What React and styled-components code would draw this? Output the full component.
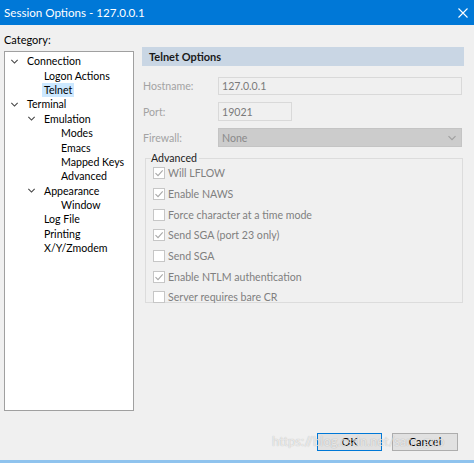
import React from "react";
import styled, { createGlobalStyle } from "styled-components";

const Global = createGlobalStyle`
  html, body { margin: 0; padding: 0; background: #f0f0f0; }
  body { font-family: Lato, "Noto Sans", sans-serif; font-size: 10.6px; }
`;

const Window = styled.div`
  position: relative;
  width: 474px;
  height: 463px;
  display: flex;
  flex-direction: column;
  background: #f0f0f0;
  box-sizing: border-box;
  border-bottom: 3px solid #8fc3ee;
  overflow: hidden;
`;

const TitleBar = styled.div`
  height: 25px;
  flex: none;
  background: #0078d7;
  color: #fff;
  display: flex;
  align-items: center;
  justify-content: space-between;
  padding: 0 6px 0 4px;
  font-size: 11.6px;
`;

const Close = styled.svg`
  width: 10px;
  height: 10px;
`;

const Body = styled.div`
  flex: 1;
  display: flex;
  flex-direction: column;
  padding: 8px 10px 0 4px;
`;

const Main = styled.div`
  display: flex;
  gap: 8px;
  height: 378px;
`;

const LeftCol = styled.div`
  width: 130px;
  display: flex;
  flex-direction: column;
  gap: 4px;
`;

const Caption = styled.div`
  height: 14px;
  line-height: 14px;
  color: #000;
  font-size: 11px;
`;

const TreeBox = styled.div`
  flex: 1;
  background: #fff;
  border: 1px solid #a0a0a0;
  padding-top: 2px;
  box-sizing: border-box;
`;

const TreeRow = styled.div`
  height: 14.4px;
  display: flex;
  align-items: center;
  padding-left: ${(p) => 5 + p.$level * 17}px;
  color: #000;
  white-space: nowrap;
`;

const Toggle = styled.span`
  width: 15px;
  display: inline-flex;
  justify-content: flex-start;
  align-items: center;
  flex: none;
`;

const TreeLabel = styled.span`
  padding: 0 2px;
  line-height: 14px;
  background: ${(p) => (p.$selected ? "#cce8ff" : "transparent")};
`;

const RightPanel = styled.div`
  flex: 1;
  display: flex;
  flex-direction: column;
  margin-top: 14px;
`;

const Header = styled.div`
  height: 19px;
  background: #c9d6e4;
  display: flex;
  align-items: center;
  padding-left: 7px;
  font-weight: 700;
  font-size: 11px;
  color: #1a1a1a;
  margin-bottom: 11px;
`;

const FormRow = styled.div`
  display: flex;
  align-items: center;
  margin-bottom: ${(p) => (p.$last ? 0 : 7)}px;
  padding-left: 1px;
`;

const FieldLabel = styled.div`
  width: 75px;
  color: #a3a3a3;
`;

const Input = styled.div`
  box-sizing: border-box;
  width: ${(p) => p.$w}px;
  height: ${(p) => p.$h || 19}px;
  border: 1px solid #d9d9d9;
  background: #f0f0f0;
  color: #7a7a7a;
  display: flex;
  align-items: center;
  padding-left: 3px;
`;

const Select = styled.div`
  box-sizing: border-box;
  width: 244px;
  height: 19px;
  border: 1px solid #c4c4c4;
  background: #cccccc;
  color: #8a8a8a;
  display: flex;
  align-items: center;
  justify-content: space-between;
  padding: 0 4px 0 3px;
`;

const Group = styled.fieldset`
  margin: 4px 1px 0 3px;
  padding: 0 0 0 7px;
  border: 1px solid #dcdcdc;
  height: 152px;
  box-sizing: border-box;
`;

const Legend = styled.legend`
  padding: 0 2px 0 0;
  margin-left: -2px;
  color: #222;
  line-height: 14px;
`;

const CheckRow = styled.div`
  height: 20.7px;
  display: flex;
  align-items: center;
  gap: 3px;
  color: #7f7f7f;
  margin-top: ${(p) => (p.$first ? "-2px" : "0")};
`;

const Box = styled.span`
  width: 12px;
  height: 12px;
  box-sizing: border-box;
  border: 1px solid #c6c6c6;
  background: #fff;
  display: inline-flex;
  align-items: center;
  justify-content: center;
  flex: none;
`;

const Footer = styled.div`
  flex: 1;
  display: flex;
  justify-content: flex-end;
  align-items: flex-start;
  gap: 10px;
  padding-top: 22px;
  padding-right: 6px;
`;

const Button = styled.button`
  width: ${(p) => (p.$primary ? 65 : 66)}px;
  height: 18px;
  box-sizing: border-box;
  border: 1px solid ${(p) => (p.$primary ? "#0078d7" : "#adadad")};
  background: #e1e1e1;
  font-family: inherit;
  font-size: 11px;
  color: #000;
  padding: 0;
  line-height: 14px;
`;

const Watermark = styled.div`
  position: absolute;
  left: 272px;
  top: 433px;
  font-size: 13px;
  color: rgba(255, 255, 255, 0.7);
  text-shadow: 0 0 1px rgba(0, 0, 0, 0.3);
  pointer-events: none;
  white-space: nowrap;
`;

const Chevron = ({ color = "#444", size = 9 }) => (
  <svg width={size} height={size} viewBox="0 0 10 10">
    <path d="M1.5 3.2 L5 6.7 L8.5 3.2" fill="none" stroke={color} strokeWidth="1.2" />
  </svg>
);

const Check = () => (
  <svg width="10" height="10" viewBox="0 0 10 10">
    <path d="M1.5 5.2 L4 7.6 L8.7 2.4" fill="none" stroke="#a8a8a8" strokeWidth="1.1" />
  </svg>
);

const tree = [
  { label: "Connection", level: 0, open: true },
  { label: "Logon Actions", level: 1 },
  { label: "Telnet", level: 1, selected: true },
  { label: "Terminal", level: 0, open: true },
  { label: "Emulation", level: 1, open: true },
  { label: "Modes", level: 2 },
  { label: "Emacs", level: 2 },
  { label: "Mapped Keys", level: 2 },
  { label: "Advanced", level: 2 },
  { label: "Appearance", level: 1, open: true },
  { label: "Window", level: 2 },
  { label: "Log File", level: 1 },
  { label: "Printing", level: 1 },
  { label: "X/Y/Zmodem", level: 1 },
];

const checks = [
  { label: "Will LFLOW", on: true },
  { label: "Enable NAWS", on: true },
  { label: "Force character at a time mode", on: false },
  { label: "Send SGA (port 23 only)", on: true },
  { label: "Send SGA", on: false },
  { label: "Enable NTLM authentication", on: true },
  { label: "Server requires bare CR", on: false },
];

export default function App() {
  return (
    <>
      <Global />
      <Window>
        <TitleBar>
          <span>Session Options - 127.0.0.1</span>
          <Close viewBox="0 0 10 10">
            <path d="M0.5 0.5 L9.5 9.5 M9.5 0.5 L0.5 9.5" stroke="#fff" strokeWidth="1.1" />
          </Close>
        </TitleBar>
        <Body>
          <Main>
            <LeftCol>
              <Caption>Category:</Caption>
              <TreeBox>
                {tree.map((t) => (
                  <TreeRow key={t.label + t.level} $level={t.level}>
                    <Toggle>{t.open ? <Chevron /> : null}</Toggle>
                    <TreeLabel $selected={t.selected}>{t.label}</TreeLabel>
                  </TreeRow>
                ))}
              </TreeBox>
            </LeftCol>
            <RightPanel>
              <Header>Telnet Options</Header>
              <FormRow>
                <FieldLabel>Hostname:</FieldLabel>
                <Input $w={244} $h={18}>127.0.0.1</Input>
              </FormRow>
              <FormRow>
                <FieldLabel>Port:</FieldLabel>
                <Input $w={74}>19021</Input>
              </FormRow>
              <FormRow $last>
                <FieldLabel>Firewall:</FieldLabel>
                <Select>
                  <span>None</span>
                  <Chevron color="#a0a0a0" size={10} />
                </Select>
              </FormRow>
              <Group>
                <Legend>Advanced</Legend>
                {checks.map((c, i) => (
                  <CheckRow key={c.label} $first={i === 0}>
                    <Box>{c.on ? <Check /> : null}</Box>
                    <span>{c.label}</span>
                  </CheckRow>
                ))}
              </Group>
            </RightPanel>
          </Main>
          <Footer>
            <Button $primary>OK</Button>
            <Button>Cancel</Button>
          </Footer>
        </Body>
        <Watermark>https://blog.csdn.net/sam_guo</Watermark>
      </Window>
    </>
  );
}
